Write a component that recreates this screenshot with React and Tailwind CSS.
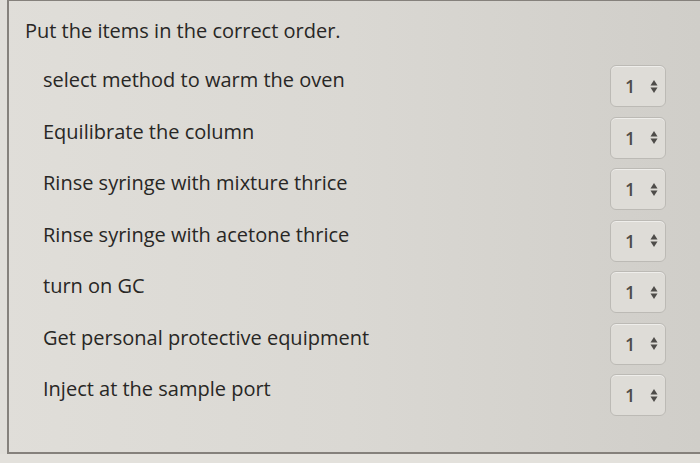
const steps = [
  "select method to warm the oven",
  "Equilibrate the column",
  "Rinse syringe with mixture thrice",
  "Rinse syringe with acetone thrice",
  "turn on GC",
  "Get personal protective equipment",
  "Inject at the sample port",
];

function OrderSelect() {
  return (
    <div className="w-[56px] h-[42px] shrink-0 rounded-[6px] border border-[#bcbab5] bg-[#dedcd7] shadow-[inset_0_1px_0_rgba(255,255,255,0.5)] flex items-center pl-[14px] gap-[15px]">
      <span className="text-[18px] leading-none font-semibold text-[#4e4c49]">1</span>
      <svg width="8" height="15" viewBox="0 0 8 15" className="text-[#4e4c49]">
        <path d="M4 1 L7.5 6.5 L0.5 6.5 Z" fill="currentColor" />
        <path d="M4 14 L7.5 8.5 L0.5 8.5 Z" fill="currentColor" />
      </svg>
    </div>
  );
}

export default function App() {
  return (
    <div
      className="w-[700px] h-[463px] overflow-hidden bg-gradient-to-r from-[#e0ded9] via-[#dad8d3] to-[#d0cec9] text-[#282725]"
      style={{ fontFamily: '"Open Sans", "Noto Sans", sans-serif' }}
    >
      <div className="ml-[7px] w-[720px] h-[454px] border-l-2 border-b-2 border-t border-[#85817c] pt-[17px] pl-[16px]">
        <h1 className="text-[20px] leading-[26px]">Put the items in the correct order.</h1>

        <div className="mt-[21px] w-[661px] flex flex-col">
          {steps.map((step) => (
            <div key={step} className="h-[51.5px] flex items-start justify-between pl-[18px] pr-[20px]">
              <span className="pt-[2px] text-[20px] leading-[26px]">{step}</span>
              <OrderSelect />
            </div>
          ))}
        </div>
      </div>
      <div className="h-[9px] bg-[#e3e1dc]" />
    </div>
  );
}
